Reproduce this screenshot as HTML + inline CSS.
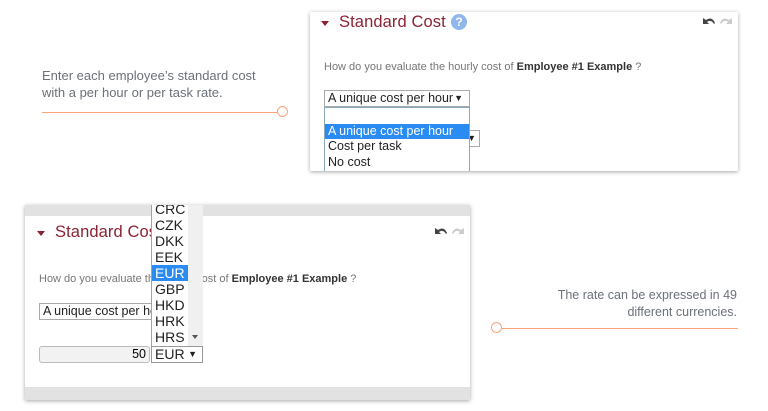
<!DOCTYPE html>
<html><head><meta charset="utf-8"><style>
*{margin:0;padding:0;box-sizing:border-box}
body{width:768px;height:411px;background:#fff;position:relative;overflow:hidden;font-family:"Liberation Sans",sans-serif}
.abs{position:absolute}
.panel{position:absolute;background:#fff;box-shadow:0 1px 4px rgba(0,0,0,.35)}
.title{position:absolute;color:#8b2233;font-size:16.5px;font-family:"Liberation Sans",sans-serif;letter-spacing:0.1px;white-space:nowrap}
.tri{position:absolute;width:0;height:0;border-left:4px solid transparent;border-right:4px solid transparent;border-top:5px solid #8b2233}
.q{position:absolute;font-size:11px;color:#777;font-family:"Liberation Sans",sans-serif;white-space:nowrap}
.q b{color:#333}
.sel{position:absolute;border:1px solid #aaa;background:#fff;font-size:12.5px;color:#222;padding-left:3px;line-height:15px;white-space:nowrap}
.list{position:absolute;background:#fff;border:1px solid #8ab;font-size:12.5px;color:#222}
.list div{height:15.5px;line-height:15.5px;padding-left:3px}
.hl{background:#2a8bf2;color:#fff}
.note{position:absolute;font-size:12.5px;color:#6b7079;line-height:17px;white-space:nowrap}
.line{position:absolute;height:1px;background:#f7a47c}
.circ{position:absolute;width:11px;height:11px;border:1.5px solid #f7a47c;border-radius:50%;background:#fff}
.cur div{height:16px;line-height:16px;font-size:14px;width:36px;padding-left:3px}
</style></head><body>

<div class="note" style="left:42px;top:67px;font-size:13px">Enter each employee’s standard cost<br>with a per hour or per task rate.</div>
<div class="line" style="left:42px;top:112px;width:236px"></div>
<div class="circ" style="left:277px;top:106px"></div>

<div class="panel" style="left:310px;top:12px;width:428px;height:159px">
  <div class="tri" style="left:11px;top:9px"></div>
  <div class="title" style="left:29px;top:1px">Standard Cost</div>
  <div class="abs" style="left:141px;top:2px;width:16px;height:16px;border-radius:50%;background:#8fb7ec;color:#fff;font-size:12px;font-weight:bold;text-align:center;line-height:16px">?</div>
  <svg class="abs" style="left:391px;top:3px" width="34" height="12" viewBox="0 0 34 12"><path d="M2 3 L2 9 L8 9 L6 7 Q10 4 13 9 L14 8 Q11 1 5 5 Z" fill="#444"/><path d="M31 3 L31 9 L25 9 L27 7 Q23 4 20 9 L19 8 Q22 1 28 5 Z" fill="#ccc"/></svg>
  <div class="q" style="left:14px;top:49px">How do you evaluate the hourly cost of <b>Employee #1 Example</b> ?</div>
  <div class="sel" style="left:14px;top:78px;width:146px;height:17px">A unique cost per hour <span style="position:absolute;right:6px;font-size:9px">▼</span></div>
  <div class="sel" style="left:14px;top:118px;width:156px;height:17px"><span style="position:absolute;right:3px;font-size:9px">▼</span></div>
  <div class="list" style="left:14px;top:95px;width:146px;height:64px;border-bottom:none">
    <div></div><div class="hl">A unique cost per hour</div><div>Cost per task</div><div>No cost</div>
  </div>
</div>

<div class="panel" style="left:25px;top:205px;width:445px;height:195px">
  <div class="abs" style="left:0;top:0;width:445px;height:11px;background:#e2e2e2"></div>
  <div class="abs" style="left:0;top:182px;width:445px;height:13px;background:#e2e2e2"></div>
  <div class="tri" style="left:12px;top:26px"></div>
  <div class="title" style="left:30px;top:18px">Standard Cost</div>
  <svg class="abs" style="left:408px;top:20px" width="34" height="12" viewBox="0 0 34 12"><path d="M2 3 L2 9 L8 9 L6 7 Q10 4 13 9 L14 8 Q11 1 5 5 Z" fill="#444"/><path d="M31 3 L31 9 L25 9 L27 7 Q23 4 20 9 L19 8 Q22 1 28 5 Z" fill="#ccc"/></svg>
  <div class="q" style="left:14px;top:68px">How do you evaluate the hourly cost of <b>Employee #1 Example</b> ?</div>
  <div class="sel" style="left:14px;top:98px;width:140px;height:17px">A unique cost per hour</div>
  <div class="abs" style="left:14px;top:141px;width:111px;height:17px;border:1px solid #bbb;border-radius:3px;background:#f2f2f2;font-size:12.5px;text-align:right;padding-right:3px;line-height:15px">50</div>
  <div class="sel" style="left:126px;top:141px;width:52px;height:17px;border-color:#999;font-size:14px">EUR <span style="position:absolute;right:5px;font-size:9px">▼</span></div>
  <div class="abs" style="left:126px;top:0px;width:52px;height:141px;border-left:1px solid #8ab;background:#fff;overflow:hidden">
    <div class="abs" style="left:36px;top:0;width:16px;height:141px;background:#f0f0f0"></div>
    <div class="abs" style="left:40px;top:130px;width:0;height:0;border-left:3.5px solid transparent;border-right:3.5px solid transparent;border-top:4px solid #555"></div>
    <div class="cur abs" style="left:0;top:-4px;color:#222">
      <div>CRC</div><div>CZK</div><div>DKK</div><div>EEK</div><div class="hl">EUR</div><div>GBP</div><div>HKD</div><div>HRK</div><div>HRS</div>
    </div>
  </div>
</div>

<div class="note" style="right:31px;top:287px;text-align:right">The rate can be expressed in 49<br>different currencies.</div>
<div class="line" style="left:502px;top:328px;width:236px"></div>
<div class="circ" style="left:491px;top:322px"></div>
</body></html>
